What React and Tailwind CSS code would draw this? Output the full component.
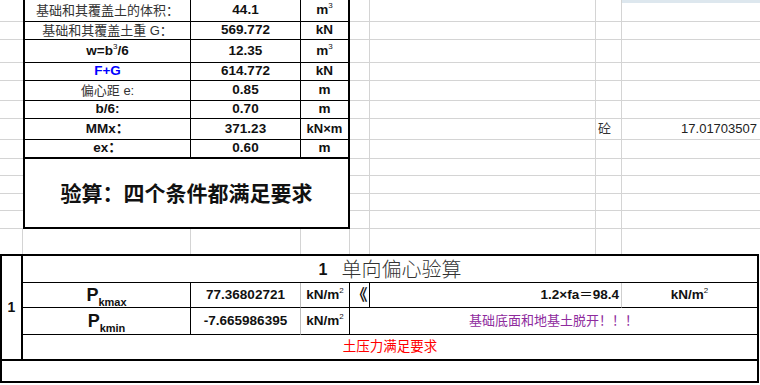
import React from "react";

const GRAY = "border-[#d4d4d4]";

// one spreadsheet cell
const Cell = ({ className = "", children }) => (
  <div className={`flex items-center justify-center overflow-hidden whitespace-nowrap ${className}`}>
    {children}
  </div>
);

const Sup = ({ children }) => (
  <span className="relative -top-[6px] text-[8px] font-normal">{children}</span>
);

const M3 = () => (
  <span>
    m<Sup>3</Sup>
  </span>
);

const rows = [
  {
    label: <span className="font-normal text-[13px] text-[#333]">基础和其覆盖土的体积：</span>,
    value: "44.1",
    unit: <M3 />,
  },
  {
    label: <span className="font-normal text-[13px] text-[#333]">基础和其覆盖土重 G：</span>,
    value: "569.772",
    unit: "kN",
  },
  {
    label: (
      <span>
        w=b<Sup>3</Sup>/6
      </span>
    ),
    value: "12.35",
    unit: <M3 />,
  },
  { label: <span className="text-[#0000ff]">F+G</span>, value: "614.772", unit: "kN" },
  {
    label: <span className="font-normal text-[13px] text-[#333]">偏心距 e:</span>,
    value: "0.85",
    unit: "m",
  },
  { label: "b/6:", value: "0.70", unit: "m" },
  { label: "MMx：", value: "371.23", unit: "kN×m" },
  { label: "ex：", value: "0.60", unit: "m" },
];

const GridTail = ({ row }) => (
  <>
    <Cell className={`border-r border-b ${GRAY}`} />
    <Cell className={`border-r border-b ${GRAY}`} />
    <Cell className={`border-r border-b ${GRAY} justify-start pl-[2px] text-[13px] font-normal text-[#333]`}>
      {row === 6 ? "砼" : null}
    </Cell>
    <Cell
      className={`border-b ${GRAY} justify-end pr-[3px] text-[13px] font-normal text-[#222] ${
        row === 0 ? "border-t-[3px] border-t-[#dde7ee]" : ""
      }`}
    >
      {row === 6 ? "17.01703507" : null}
    </Cell>
  </>
);

function TopSheet() {
  return (
    <div className="grid grid-cols-[23px_168px_110px_49px_20px_226px_26px_138px] grid-rows-[22px_18px_23px_18px_20px_18px_21px_19px_17px_18px_17px_18px_25px] text-[13.5px] font-bold text-[#111]">
      {rows.map((r, i) => {
        const last = i === rows.length - 1;
        const bb = last ? "border-b-2" : "border-b";
        return (
          <React.Fragment key={i}>
            <Cell className={`border-b ${GRAY}`} />
            <Cell className={`border-l-2 border-r ${bb} border-black`}>{r.label}</Cell>
            <Cell className={`border-r ${bb} border-black`}>{r.value}</Cell>
            <Cell className={`border-r-2 ${bb} border-black ${r.unit === "kN×m" ? "text-[13px]" : ""}`}>{r.unit}</Cell>
            <GridTail row={i} />
          </React.Fragment>
        );
      })}
      {[0, 1, 2, 3].map((i) => (
        <React.Fragment key={"g" + i}>
          <Cell className={`border-b ${GRAY}`} />
          {i === 0 ? (
            <Cell className="col-span-3 row-span-4 border-l-2 border-r-2 border-b-2 border-black text-[21px] pt-[2px]">
              验算：四个条件都满足要求
            </Cell>
          ) : null}
          <GridTail row={8 + i} />
        </React.Fragment>
      ))}
      {[0, 1, 2, 3, 4, 5, 6].map((i) => (
        <Cell key={"b" + i} className={`border-r ${GRAY}`} />
      ))}
      <Cell />
    </div>
  );
}

const P = ({ sub }) => (
  <span className="font-bold">
    <span className="text-[18px]">P</span>
    <span className="relative top-[5px] text-[11px]">{sub}</span>
  </span>
);

const KN2 = () => (
  <span>
    kN/m<Sup>2</Sup>
  </span>
);

function CheckBox() {
  return (
    <div className="grid h-[129px] w-[759px] grid-cols-[21px_168px_110px_49px_20px_252px_135px] grid-rows-[27px_25px_27px_26px_20px] border-2 border-black text-[13.5px] text-[#111]">
      <Cell className="row-span-4 border-r-2 border-b-2 border-black font-bold text-[14px]">1</Cell>
      <Cell className="col-span-6 border-b border-black pt-[2px]">
        <span className="mr-[14px] text-[16px] font-bold">1</span>
        <span className="text-[20px] font-light text-[#333]">单向偏心验算</span>
      </Cell>

      <Cell className="border-r border-b border-black">
        <P sub="kmax" />
      </Cell>
      <Cell className="border-r border-b border-r-[#bdbdbd] border-b-black font-bold">77.36802721</Cell>
      <Cell className="border-r border-b border-black font-bold">
        <KN2 />
      </Cell>
      <Cell className="border-r border-b border-black text-[16px] font-bold">《</Cell>
      <Cell className="border-r border-b border-r-[#cfcfcf] border-b-black justify-end pr-[2px] font-bold">
        1.2×fa <span className="font-normal">＝</span>98.4
      </Cell>
      <Cell className="border-b border-black font-bold">
        <KN2 />
      </Cell>

      <Cell className="border-r border-b border-black">
        <P sub="kmin" />
      </Cell>
      <Cell className="border-r border-b border-r-[#bdbdbd] border-b-black font-bold">-7.665986395</Cell>
      <Cell className="border-r border-b border-black font-bold">
        <KN2 />
      </Cell>
      <Cell className="col-span-3 border-b border-black text-[13px] text-[#8e2a9d]">
        基础底面和地基土脱开！！！
      </Cell>

      <Cell className="col-span-6 border-b-2 border-black text-[13.5px] text-[#ff0000]">土压力满足要求</Cell>
      <Cell className="col-span-7" />
    </div>
  );
}

export default function App() {
  return (
    <div className="h-[385px] w-[760px] overflow-hidden bg-white font-['Liberation_Sans','Noto_Sans_CJK_SC',sans-serif]">
      <TopSheet />
      <CheckBox />
    </div>
  );
}
